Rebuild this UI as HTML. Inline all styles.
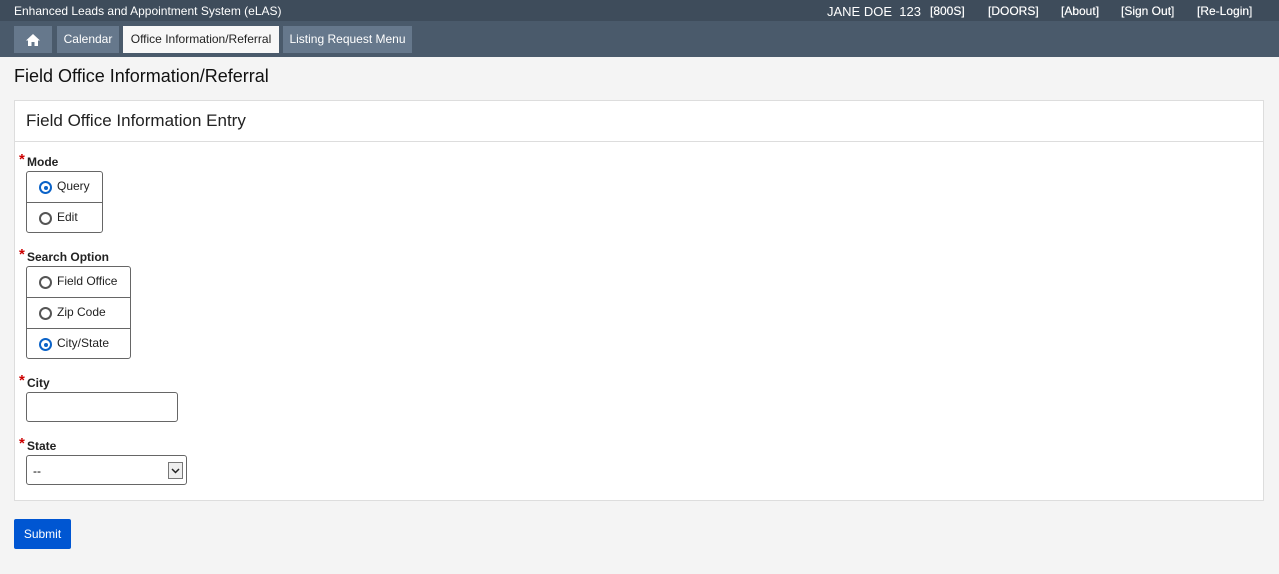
<!DOCTYPE html><html><head><style>
body{margin:0;width:1279px;height:574px;background:#f4f4f4;font-family:"Liberation Sans",sans-serif;position:relative;overflow:hidden}
.a{position:absolute}
.top{left:0;top:0;width:1279px;height:21px;background:#3e4c5b;color:#fff;font-size:12px}
.nav{left:0;top:21px;width:1279px;height:36px;background:#4a5a6b}
.btn{top:26px;height:27px;background:#66788c;color:#fff;font-size:12px;line-height:27px;text-align:center}
.lbl{font-size:12px;font-weight:bold;color:#222}
.lbl b{color:#c00;position:absolute;left:-8px;top:-4px;font-size:15px}
.grp{border:1px solid #666;border-radius:3px;background:#fff}
.row{height:30px;line-height:29px;font-size:12px;color:#222;border-bottom:1px solid #666;position:relative;padding-left:30px}
.row:last-child{border-bottom:none;height:29px}
.r{position:absolute;left:12px;top:9px;width:9px;height:9px;border:2px solid #555;border-radius:50%;background:#fff}
.r.on{border-color:#0b63c8}
.r.on:after{content:"";position:absolute;left:2.5px;top:2.5px;width:4px;height:4px;border-radius:50%;background:#0b63c8}
.tl{top:4px;text-shadow:0 0 0.4px #fff}
</style></head><body>
<div class="a top"><span class="a" style="left:14px;top:4px">Enhanced Leads and Appointment System (eLAS)</span>
<span class="a" style="left:827px;top:4px;font-size:13px">JANE DOE&nbsp;&nbsp;123</span>
<span class="a tl" style="left:930px">[800S]</span>
<span class="a tl" style="left:988px">[DOORS]</span>
<span class="a tl" style="left:1061px">[About]</span>
<span class="a tl" style="left:1121px">[Sign Out]</span>
<span class="a tl" style="left:1197px">[Re-Login]</span></div>
<div class="a nav"></div>
<div class="a btn" style="left:14px;width:38px"><svg width="14" height="12" viewBox="0 0 14 12" style="margin-top:8px"><path d="M7 0L0 6.5h2V12h3.5V8h3v4H12V6.5h2z" fill="#fff"/></svg></div>
<div class="a btn" style="left:57px;width:62px">Calendar</div>
<div class="a btn" style="left:123px;width:156px;background:#f7f7f7;color:#222">Office Information/Referral</div>
<div class="a btn" style="left:283px;width:129px">Listing Request Menu</div>
<div class="a" style="left:14px;top:66px;font-size:18px;color:#111">Field Office Information/Referral</div>
<div class="a" style="left:14px;top:100px;width:1248px;height:399px;border:1px solid #ddd;background:#fff"></div>
<div class="a" style="left:15px;top:141px;width:1248px;height:1px;background:#ddd"></div>
<div class="a" style="left:26px;top:111px;font-size:17px;color:#222">Field Office Information Entry</div>
<div class="a lbl" style="left:27px;top:155px"><b>*</b>Mode</div>
<div class="a grp" style="left:26px;top:171px;width:75px"><div class="row"><i class="r on"></i>Query</div><div class="row"><i class="r"></i>Edit</div></div>
<div class="a lbl" style="left:27px;top:250px"><b>*</b>Search Option</div>
<div class="a grp" style="left:26px;top:266px;width:103px"><div class="row"><i class="r"></i>Field Office</div><div class="row"><i class="r"></i>Zip Code</div><div class="row"><i class="r on"></i>City/State</div></div>
<div class="a lbl" style="left:27px;top:376px"><b>*</b>City</div>
<div class="a" style="left:26px;top:392px;width:150px;height:28px;border:1px solid #666;border-radius:3px;background:#fff"></div>
<div class="a lbl" style="left:27px;top:439px"><b>*</b>State</div>
<div class="a" style="left:26px;top:455px;width:159px;height:28px;border:1px solid #666;border-radius:3px;background:#fff;font-size:12px"><span class="a" style="left:6px;top:8px">--</span>
<div class="a" style="left:141px;top:6px;width:13px;height:15px;border:1px solid #777;background:#eee"><svg width="13" height="15"><path d="M3 6l3.5 3.5L10 6" stroke="#222" stroke-width="1.5" fill="none"/></svg></div></div>
<div class="a" style="left:14px;top:519px;width:57px;height:30px;background:#0056d2;border-radius:2px;color:#fff;font-size:12px;line-height:30px;text-align:center">Submit</div>
</body></html>
